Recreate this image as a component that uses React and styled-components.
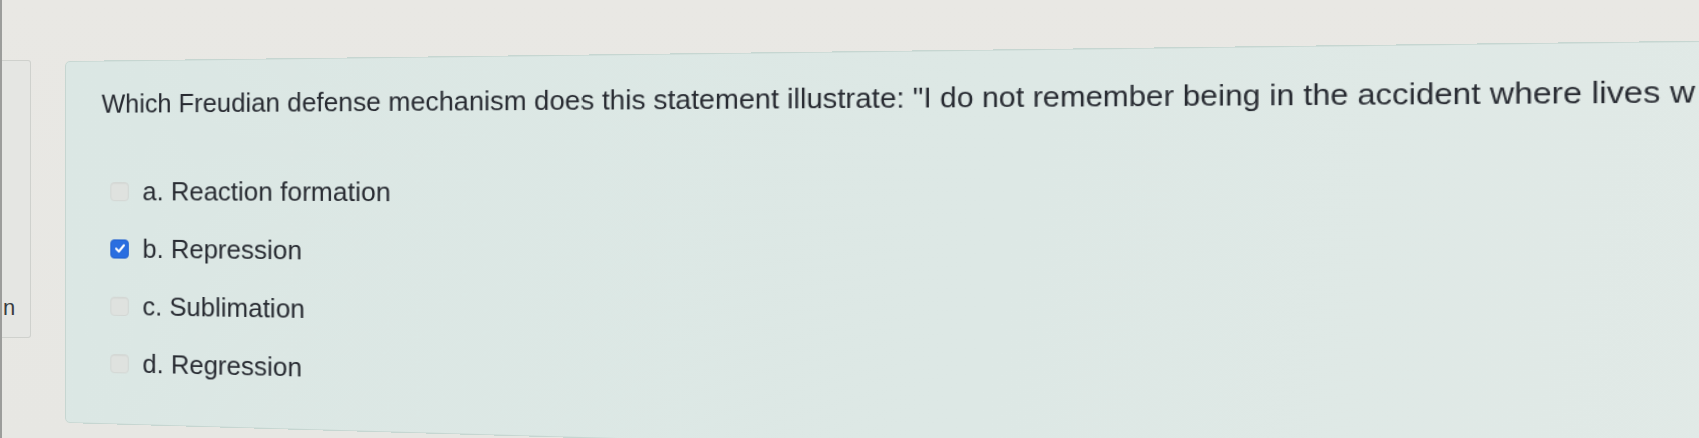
import React from 'react';
import styled, { createGlobalStyle } from 'styled-components';

const GlobalStyle = createGlobalStyle`
  html, body {
    margin: 0;
    padding: 0;
    background: #e8e7e3;
    overflow: hidden;
  }
  body {
    font-family: "Liberation Sans", Arial, sans-serif;
  }
`;

const Page = styled.div`
  display: flex;
  align-items: flex-start;
  width: 1699px;
  height: 438px;
  overflow: hidden;
  background: linear-gradient(180deg, #e9e8e4 0%, #e7e7e3 100%);
  border-left: 2px solid #9c9d9b;
  box-sizing: border-box;
`;

const SidePanel = styled.div`
  flex: 0 0 29px;
  height: 278px;
  margin-top: 60px;
  background: #e5e6e3;
  border: 1px solid #cfd1cd;
  border-left: none;
  border-radius: 0 3px 3px 0;
  display: flex;
  flex-direction: column;
  justify-content: flex-end;
  padding-bottom: 18px;
  box-sizing: border-box;
  font-size: 22px;
  color: #3a3d42;
  overflow: hidden;
`;

const SideLabel = styled.span`
  margin-left: 1px;
  line-height: 1;
`;

/* the photo looks at the screen from the left, so the card is drawn in perspective */
const QuestionCard = styled.div`
  flex: 0 0 1600px;
  margin-left: 34px;
  margin-top: 61px;
  height: 362px;
  box-sizing: border-box;
  padding: 26px 0 0 37px;
  background: linear-gradient(100deg, #dbe7e4 0%, #dde8e5 55%, #e2eae7 100%);
  border: 1px solid #c6d6d1;
  border-radius: 5px;
  transform-origin: 0 108px;
  transform: perspective(2550px) rotateY(-16.3deg);
  overflow: hidden;
`;

const Question = styled.p`
  margin: 0;
  font-size: 25.8px;
  line-height: 32px;
  color: #282b32;
  white-space: nowrap;
`;

const Options = styled.ul`
  list-style: none;
  margin: 55px 0 0 9px;
  padding: 0;
  display: flex;
  flex-direction: column;
  gap: 25px;
`;

const Option = styled.li`
  display: flex;
  align-items: center;
  gap: 14px;
  height: 32px;
  font-size: 26px;
  color: #282b32;
`;

const Box = styled.span`
  flex: 0 0 17px;
  height: 17px;
  border-radius: 4px;
  display: flex;
  align-items: center;
  justify-content: center;
  background: ${p => (p.checked ? '#2a6ee0' : '#dfe2df')};
  border: 1px solid ${p => (p.checked ? '#1f5fcf' : '#d3d7d4')};
  box-shadow: ${p => (p.checked ? 'none' : 'inset 0 1px 1px rgba(0,0,0,0.04)')};
`;

const CheckMark = () => (
  <svg width="12" height="12" viewBox="0 0 12 12">
    <path d="M2 6.2 L4.8 9 L10 2.8" fill="none" stroke="#fff" strokeWidth="2.2" strokeLinecap="round" strokeLinejoin="round" />
  </svg>
);

const options = [
  { label: 'a. Reaction formation', checked: false },
  { label: 'b. Repression', checked: true },
  { label: 'c. Sublimation', checked: false },
  { label: 'd. Regression', checked: false },
];

const App = () => (
  <>
    <GlobalStyle />
    <Page>
      <SidePanel>
        <SideLabel>n</SideLabel>
      </SidePanel>
      <QuestionCard>
        <Question>
          Which Freudian defense mechanism does this statement illustrate: "I do not remember being in the accident where lives w
        </Question>
        <Options>
          {options.map((o, i) => (
            <Option key={i}>
              <Box checked={o.checked}>{o.checked && <CheckMark />}</Box>
              <span>{o.label}</span>
            </Option>
          ))}
        </Options>
      </QuestionCard>
    </Page>
  </>
);

export default App;
